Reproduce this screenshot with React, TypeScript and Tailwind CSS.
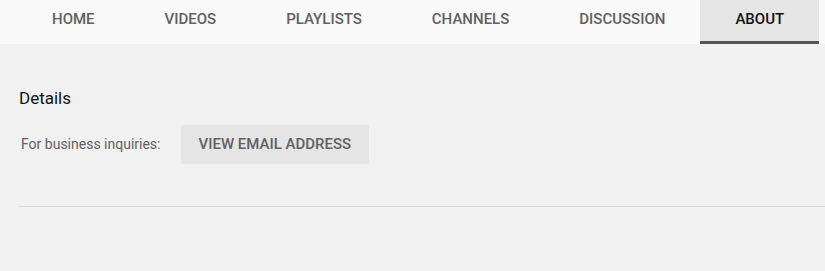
import React from "react";

const tabs = ["HOME", "VIDEOS", "PLAYLISTS", "CHANNELS", "DISCUSSION", "ABOUT"];

export default function App() {
  return (
    <div className="w-[825px] h-[271px] overflow-hidden bg-[#f1f1f1] font-['Roboto',sans-serif]">
      <div className="h-[44px] bg-[#f9f9f9] flex pl-[17px]">
        {tabs.map((t) => {
          const active = t === "ABOUT";
          return (
            <div
              key={t}
              className={
                active
                  ? "flex items-center px-[35px] pb-[3px] text-[15px] font-medium text-[#111111] bg-[#e5e5e5] border-b-[3px] border-[#555555]"
                  : "flex items-center px-[35px] pb-[3px] text-[15px] font-medium text-[#606060] border-b-[3px] border-transparent"
              }
            >
              {t}
            </div>
          );
        })}
      </div>
      <div className="pl-[19px] pt-[42px]">
        <div className="text-[17px] leading-[24px] text-[#111111]">Details</div>
        <div className="flex items-center mt-[15px]">
          <span className="ml-[2px] mr-[20px] text-[14px] text-[#606060]">For business inquiries:</span>
          <button className="h-[39px] px-[18px] bg-[#e5e5e5] rounded-[2px] text-[15px] font-medium text-[#606060]">
            VIEW EMAIL ADDRESS
          </button>
        </div>
        <div className="mt-[42px] border-t border-[#d9d9d9]" />
      </div>
    </div>
  );
}
